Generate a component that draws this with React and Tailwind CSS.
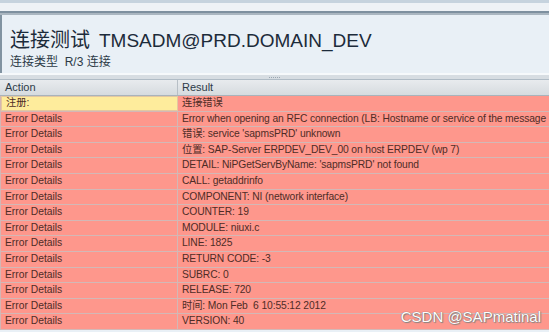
import React from "react";

const rows = [
  ["注册:", "连接错误", true],
  ["Error Details", "Error when opening an RFC connection (LB: Hostname or service of the message"],
  ["Error Details", "错误: service 'sapmsPRD' unknown"],
  ["Error Details", "位置: SAP-Server ERPDEV_DEV_00 on host ERPDEV (wp 7)"],
  ["Error Details", "DETAIL: NiPGetServByName: 'sapmsPRD' not found"],
  ["Error Details", "CALL: getaddrinfo"],
  ["Error Details", "COMPONENT: NI (network interface)"],
  ["Error Details", "COUNTER: 19"],
  ["Error Details", "MODULE: niuxi.c"],
  ["Error Details", "LINE: 1825"],
  ["Error Details", "RETURN CODE: -3"],
  ["Error Details", "SUBRC: 0"],
  ["Error Details", "RELEASE: 720"],
  ["Error Details", "时间: Mon Feb  6 10:55:12 2012"],
  ["Error Details", "VERSION: 40"],
];

function App() {
  return (
    <div
      className="relative w-[549px] h-[332px] overflow-hidden bg-[#e9f0f6]"
      style={{ fontFamily: '"Liberation Sans", "Noto Sans CJK SC", sans-serif' }}
    >
      {/* window chrome */}
      <div className="h-[3px] bg-[#c6d3de]" />
      <div className="h-[8px] bg-[#eef2f6]" />
      <div className="h-[2px] bg-[#7e909f]" />
      <div className="h-[2px] bg-[#aab6c0]" />

      {/* title panel */}
      <div className="h-[58px] border-l-2 border-[#8193a1] bg-[#e9f0f6] pl-[8px] pt-[13px] text-[#1c2b3a]">
        <div className="flex items-baseline leading-[24px] whitespace-nowrap">
          <span className="text-[20px]">连接测试</span>
          <span className="text-[19px] ml-[9px]">TMSADM@PRD.DOMAIN_DEV</span>
        </div>
        <div className="mt-[1px] text-[12px] leading-[16px] text-[#2c3a47] whitespace-pre">连接类型  R/3 连接</div>
      </div>

      {/* splitter */}
      <div className="h-[2px] bg-[#f6f9fb]" />
      <div className="h-[4px] bg-[#d7dde2] flex justify-center items-center gap-[1px]">
        {[0, 1, 2, 3, 4, 5].map((i) => (
          <span key={i} className="w-[1px] h-[1px] bg-[#9aa6b0]" />
        ))}
      </div>
      <div className="h-px bg-[#b0bcc6]" />

      {/* table header */}
      <div className="grid grid-cols-[178px_1fr] h-[16px] bg-gradient-to-b from-[#e8ebee] to-[#d6dbdf] border-b border-[#a9b3bb] text-[11px] leading-[15px] text-[#2d3b48]">
        <div className="pl-[5px] border-r border-[#b7bfc6]">Action</div>
        <div className="pl-[4px]">Result</div>
      </div>

      {/* table rows */}
      <div className="border-l border-[#d4b6b4]">
        {rows.map(([action, result, first], i) => (
          <div
            key={i}
            className="grid grid-cols-[177px_1fr] h-[15.6px] border-b border-[#d3b8b6] text-[10.3px] leading-[14.6px] text-[#4e2c26] whitespace-pre overflow-hidden"
          >
            <div
              className={
                first
                  ? "pl-[4px] bg-[#feec9c] border border-[#e3c8a0] leading-[12.6px]"
                  : "pl-[4px] bg-[#fe978c] border-r border-[#d3b8b6]"
              }
            >
              {action}
            </div>
            <div className="pl-[4px] bg-[#fe978c] overflow-hidden tracking-[-0.12px]">{result}</div>
          </div>
        ))}
      </div>

      {/* watermark */}
      <div className="absolute right-[8px] bottom-[7px] text-[15px] leading-[17px] text-white [text-shadow:0_0_1px_#555,1px_1px_1px_#888]">
        CSDN @SAPmatinal
      </div>
    </div>
  );
}

export default App;
